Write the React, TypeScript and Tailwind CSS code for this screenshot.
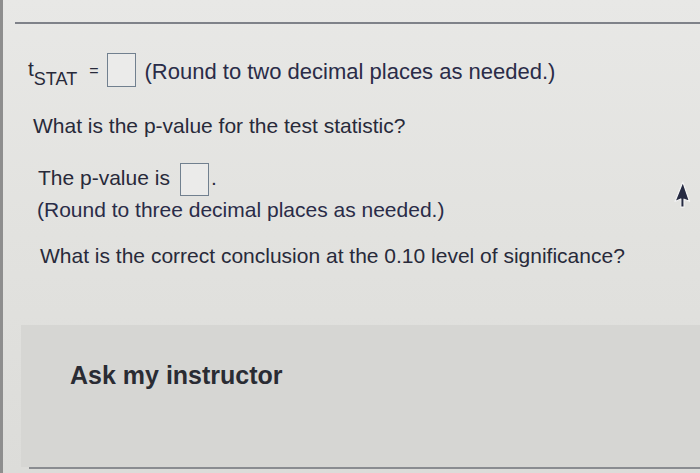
import React from "react";

export default function App() {
  return (
    <div className="w-[700px] h-[473px] overflow-hidden relative flex bg-gradient-to-b from-[#e8e8e6] via-[#e2e2df] to-[#dcdcd9] font-['Liberation_Sans',Arial,sans-serif] text-[#282a3a]">
      <div className="w-[3px] shrink-0 bg-[#8e8e8e]" />
      <div className="flex-1 flex flex-col">
        <div className="mt-[22px] ml-[12px] h-[2px] bg-[#7f8289]" />

        {/* tSTAT line */}
        <div className="mt-[29px] flex items-start h-[34px]">
          <span className="ml-[25px] mt-[4px] text-[21px] leading-[24px]">t</span>
          <span className="mt-[16px] text-[18px] leading-[20px]">STAT</span>
          <span className="ml-[12px] mt-[9px] text-[16px] leading-[18px]">=</span>
          <div className="ml-[8px] w-[29px] h-[34px] border-[1.5px] border-[#71808f] bg-[#ebebea]" />
          <span className="ml-[9px] mt-[7px] text-[22px] leading-[24px] text-[#2a2c48]">
            (Round to two decimal places as needed.)
          </span>
        </div>

        <div className="mt-[27px] ml-[30px] text-[21px] leading-[24px]">
          What is the p-value for the test statistic?
        </div>

        <div className="mt-[25px] flex items-start h-[33px]">
          <span className="ml-[35px] mt-[3px] text-[21px] leading-[24px]">The p-value is</span>
          <div className="ml-[10px] w-[29px] h-[33px] border-[1.5px] border-[#71808f] bg-[#ebebea]" />
          <span className="ml-[2px] mt-[3px] text-[21px] leading-[24px]">.</span>
        </div>

        <div className="mt-[2px] ml-[34px] text-[21px] leading-[24px] text-[#2a2c48]">
          (Round to three decimal places as needed.)
        </div>

        <div className="mt-[22px] ml-[37px] text-[21px] leading-[24px]">
          What is the correct conclusion at the 0.10 level of significance?
        </div>

        <div className="mt-[57px] ml-[18px] h-[142px] bg-[#d6d6d3] pt-[36px] pl-[49px]">
          <div className="text-[25px] leading-[28px] font-bold text-[#2a2c33]">Ask my instructor</div>
        </div>
        <div className="ml-[26px] h-[2px] bg-[#8a8c90]" />
      </div>

      <svg
        className="absolute left-[670px] top-[180px]"
        width="26"
        height="32"
        viewBox="0 0 26 32"
      >
        <path
          d="M8 3 L8 24 L12.5 19.5 L15.5 27 L18.5 25.8 L15.5 18.5 L21.5 18.5 Z"
          fill="#262b42"
          stroke="#f4f4f4"
          strokeWidth="1.2"
          strokeLinejoin="round"
          transform="rotate(22 13 15)"
        />
      </svg>
    </div>
  );
}
